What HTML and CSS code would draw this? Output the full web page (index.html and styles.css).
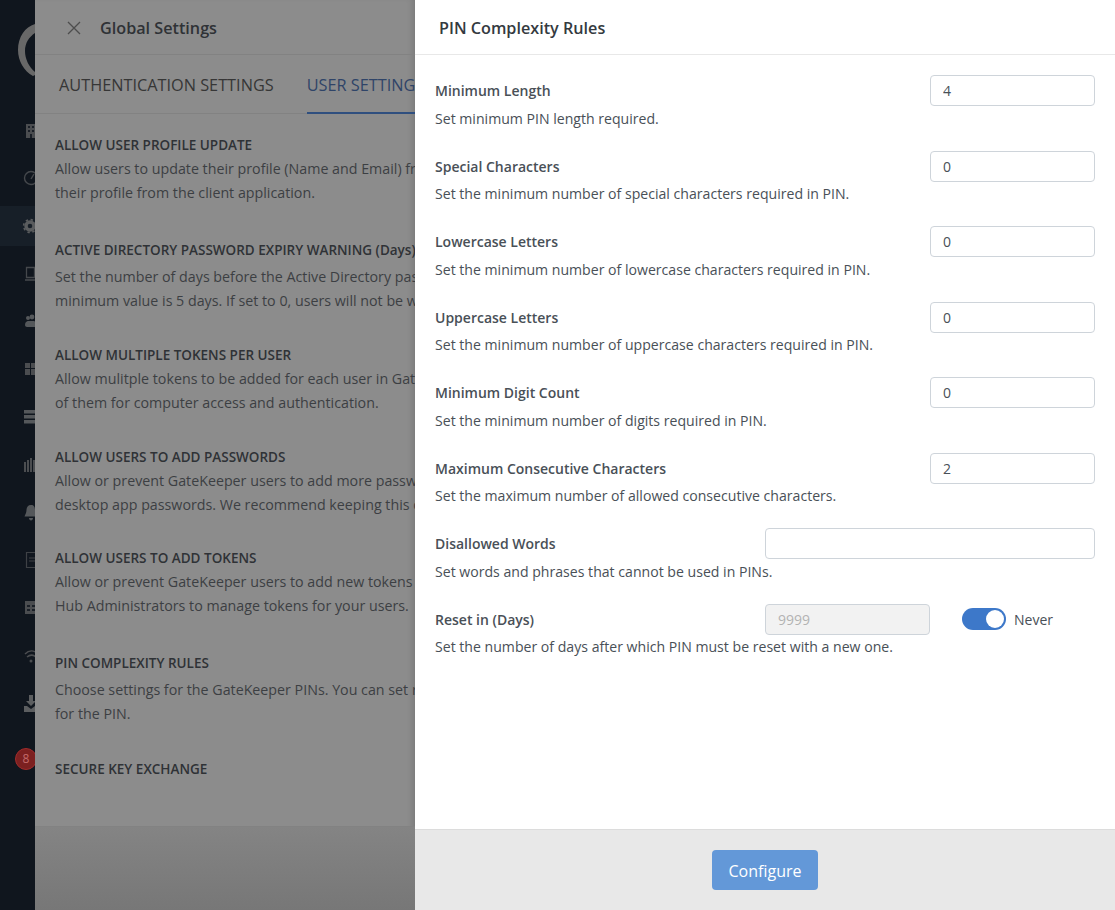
FILE: index.html
```html
<!DOCTYPE html>
<html lang="en">
<head>
<meta charset="utf-8">
<title>PIN Complexity Rules</title>
<link rel="stylesheet" href="styles.css">
</head>
<body>
<div class="app">
  <nav class="sidebar">
    <svg class="logo" width="35" height="60" viewBox="0 0 35 60"><path d="M35 0C25 3 18 13 18 26c0 11 6 21 15 26l2-1V48C29 43 25 35 25 27c0-8 4-14 10-18z" fill="#686868"/></svg>
    <div class="nav-item"><svg width="35" height="16" viewBox="0 0 35 16"><path d="M26 1h9v14h-9z" fill="#4b4d50"/><path d="M28 3h2v2h-2zM32 3h2v2h-2zM28 7h2v2h-2zM32 7h2v2h-2zM30 11h2v4h-2z" fill="#1a1f27"/></svg></div>
    <div class="nav-item"><svg width="35" height="16" viewBox="0 0 35 16"><circle cx="31" cy="8" r="6.5" fill="none" stroke="#45484c" stroke-width="1.4"/><path d="M31 9l3-5" stroke="#45484c" stroke-width="1.4"/></svg></div>
    <div class="nav-item active"><svg width="35" height="16" viewBox="0 0 35 16"><circle cx="30" cy="8" r="4" fill="none" stroke="#5a5c5e" stroke-width="3.4"/><circle cx="30" cy="8" r="6.4" fill="none" stroke="#5a5c5e" stroke-width="1.6" stroke-dasharray="2.4 2.6"/></svg></div>
    <div class="nav-item"><svg width="35" height="16" viewBox="0 0 35 16"><path d="M26.500 1.500h8v10h-8z" fill="none" stroke="#45484c" stroke-width="1.300"/><path d="M25 14h10" stroke="#45484c" stroke-width="1.600"/></svg></div>
    <div class="nav-item"><svg width="35" height="16" viewBox="0 0 35 16"><circle cx="28" cy="4" r="2" fill="#55585b"/><circle cx="32" cy="3" r="2.400" fill="#55585b"/><path d="M25 11c0-3 2-4 3-4h6c1 0 1 1 1 1v5h-8c-1 0-2-1-2-2z" fill="#55585b"/></svg></div>
    <div class="nav-item"><svg width="35" height="16" viewBox="0 0 35 16"><path d="M25 2h5v5h-5zM31 2h4v5h-4zM25 8h5v6h-5zM31 8h4v6h-4z" fill="#4b4d50"/></svg></div>
    <div class="nav-item"><svg width="35" height="16" viewBox="0 0 35 16"><path d="M24 1h11v3.500H24zM24 6h11v3.500H24zM24 11h11v3.500H24z" fill="#55585b"/></svg></div>
    <div class="nav-item"><svg width="35" height="16" viewBox="0 0 35 16"><path d="M24 5h2v10h-2zM27 3h2v12h-2zM30 1h2v14h-2zM33 3h2v12h-2z" fill="#4b4d50"/></svg></div>
    <div class="nav-item"><svg width="35" height="18" viewBox="0 0 35 18"><path d="M31 1c-3 0-4.500 2-4.500 5 0 3-1.500 5-2 6.500h12c-.5-1.500-1.500-3.500-1.500-6.500 0-3-1-5-4-5zM29 14h4c0 1.500-1 2.500-2 2.500s-2-1-2-2.500z" fill="#55585b"/></svg></div>
    <div class="nav-item"><svg width="35" height="16" viewBox="0 0 35 16"><path d="M26.500 .5h10v15h-10z" fill="none" stroke="#3e4145" stroke-width="1.200"/><path d="M29 6h6M29 9h6" stroke="#3e4145" stroke-width="1.200"/></svg></div>
    <div class="nav-item"><svg width="35" height="16" viewBox="0 0 35 16"><path d="M25 1h11v13H25z" fill="#4b4d50"/><path d="M27 5h3v2h-3zM32 5h3v2h-3zM27 9h3v2h-3zM32 9h3v2h-3z" fill="#1a1f27"/></svg></div>
    <div class="nav-item"><svg width="35" height="16" viewBox="0 0 35 16"><path d="M25 6c4-4 9-4 13 0M27 9c3-2.500 6-2.500 9 0" fill="none" stroke="#4b4d50" stroke-width="1.500"/><circle cx="31" cy="13" r="1.500" fill="#4b4d50"/></svg></div>
    <div class="nav-item"><svg width="35" height="18" viewBox="0 0 35 18"><path d="M29 0h4v6h3l-5 5-5-5h3zM24 11h3l4 3 4-3v6H24z" fill="#5c5e60"/></svg></div>
    <div class="badge">8</div>
  </nav>

  <section class="settings">
    <header class="settings-head">
      <svg class="close" width="14" height="14" viewBox="0 0 14 14"><path d="M1 1l12 12M13 1L1 13" stroke="#4d4d4d" stroke-width="1.300" fill="none"/></svg>
      <h1>Global Settings</h1>
    </header>
    <div class="tabs">
      <span class="tab">AUTHENTICATION SETTINGS</span>
      <span class="tab current">USER SETTINGS</span>
    </div>
    <div class="settings-body">
      <div class="block loose">
        <h3>ALLOW USER PROFILE UPDATE</h3>
        <p>Allow users to update their profile (Name and Email) from the Hub. Users can also update<br>their profile from the client application.</p>
      </div>
      <div class="block">
        <h3 class="spaced">ACTIVE DIRECTORY PASSWORD EXPIRY WARNING (Days)</h3>
        <p>Set the number of days before the Active Directory password expires to warn users. The<br>minimum value is 5 days. If set to 0, users will not be warned.</p>
      </div>
      <div class="block">
        <h3>ALLOW MULTIPLE TOKENS PER USER</h3>
        <p>Allow mulitple tokens to be added for each user in GateKeeper. Users can use any one<br>of them for computer access and authentication.</p>
      </div>
      <div class="block tight">
        <h3>ALLOW USERS TO ADD PASSWORDS</h3>
        <p>Allow or prevent GateKeeper users to add more passwords for websites and<br>desktop app passwords. We recommend keeping this on.</p>
      </div>
      <div class="block loose">
        <h3>ALLOW USERS TO ADD TOKENS</h3>
        <p>Allow or prevent GateKeeper users to add new tokens on their own. This allows<br>Hub Administrators to manage tokens for your users.</p>
      </div>
      <div class="block wider">
        <h3 class="spaced">PIN COMPLEXITY RULES</h3>
        <p>Choose settings for the GateKeeper PINs. You can set rules and requirements<br>for the PIN.</p>
      </div>
      <div class="block">
        <h3>SECURE KEY EXCHANGE</h3>
      </div>
    </div>
    <div class="settings-foot"></div>
  </section>

  <aside class="drawer">
    <header class="drawer-head"><h2>PIN Complexity Rules</h2></header>
    <div class="drawer-body">
      <div class="rule">
        <div class="rule-top"><label>Minimum Length</label><input class="field" type="text" value="4"></div>
        <p>Set minimum PIN length required.</p>
      </div>
      <div class="rule">
        <div class="rule-top"><label>Special Characters</label><input class="field" type="text" value="0"></div>
        <p>Set the minimum number of special characters required in PIN.</p>
      </div>
      <div class="rule">
        <div class="rule-top"><label>Lowercase Letters</label><input class="field" type="text" value="0"></div>
        <p>Set the minimum number of lowercase characters required in PIN.</p>
      </div>
      <div class="rule">
        <div class="rule-top"><label>Uppercase Letters</label><input class="field" type="text" value="0"></div>
        <p>Set the minimum number of uppercase characters required in PIN.</p>
      </div>
      <div class="rule">
        <div class="rule-top"><label>Minimum Digit Count</label><input class="field" type="text" value="0"></div>
        <p>Set the minimum number of digits required in PIN.</p>
      </div>
      <div class="rule">
        <div class="rule-top"><label>Maximum Consecutive Characters</label><input class="field" type="text" value="2"></div>
        <p>Set the maximum number of allowed consecutive characters.</p>
      </div>
      <div class="rule">
        <div class="rule-top"><label>Disallowed Words</label><input class="field wide" type="text"></div>
        <p>Set words and phrases that cannot be used in PINs.</p>
      </div>
      <div class="rule">
        <div class="rule-top reset">
          <label>Reset in (Days)</label>
          <input class="field" type="text" placeholder="9999" disabled>
          <span class="switch"><span class="knob"></span></span>
          <span class="never">Never</span>
        </div>
        <p>Set the number of days after which PIN must be reset with a new one.</p>
      </div>
    </div>
    <footer class="drawer-foot"><button class="primary" type="button">Configure</button></footer>
  </aside>
</div>
</body>
</html>
```

FILE: styles.css
```css
* { box-sizing: border-box; }
html, body { margin: 0; height: 100%; overflow: hidden; }
body { font-family: "Open Sans", "Noto Sans", sans-serif; font-size: 14px; color: #495057; }
h1, h2, h3, p { margin: 0; }

.app { display: flex; width: 1115px; height: 910px; overflow: hidden; }

.sidebar { flex: 0 0 35px; width: 35px; background: #10161e; display: flex; flex-direction: column; padding-top: 24px; position: relative; }
.logo { display: block; margin-bottom: 26.500px; }
.nav-item { height: 40px; flex: none; display: flex; align-items: center; margin-bottom: 7.750px; overflow: hidden; }
.nav-item.active { background: #171f28; }
.nav-item svg { display: block; }
.badge { position: absolute; left: 15px; top: 748px; width: 22px; height: 22px; border-radius: 50%; background: #7c2020; border: 1px solid #a02c2c; color: #c46a6a; font-size: 12px; line-height: 20px; text-align: center; clip-path: inset(0 2px 0 0); }

.settings { flex: 0 0 380px; width: 380px; background: #8c8c8c; display: flex; flex-direction: column; overflow: hidden; box-shadow: inset -6px 0 6px -4px rgba(0,0,0,.14); }
.settings-head { height: 55px; flex: none; display: flex; align-items: center; padding: 1px 0 0 32px; border-bottom: 1px solid #828282; }
.close { margin-right: 19px; }
.settings-head h1 { font-size: 16.2px; font-weight: 600; color: #2f3236; }
.tabs { height: 59px; flex: none; display: flex; gap: 33px; padding-left: 24px; border-bottom: 1px solid #828282; white-space: nowrap; }
.tab { font-size: 16.3px; line-height: 61px; height: 59px; color: #363636; flex: none; }
.tab.current { color: #2f4468; border-bottom: 2px solid #2f4f7f; }
.settings-body { flex: 1; padding: 19px 0 0 20px; white-space: nowrap; color: #3c3f43; }
.settings-body h3 { font-size: 13.5px; line-height: 24px; font-weight: 600; color: #2f3236; }
.settings-body h3.spaced { margin-bottom: 3px; }
.settings-body p { font-size: 14.25px; line-height: 24px; }
.block { margin-bottom: 30px; }
.block.loose { margin-bottom: 33px; }
.block.tight { margin-bottom: 29px; }
.block.wider { margin-bottom: 31px; }
.settings-foot { height: 84px; flex: none; background: linear-gradient(#848484, #777); border-top: 1px solid #828282; }

.drawer { flex: 0 0 700px; width: 700px; background: #fff; display: flex; flex-direction: column; }
.drawer-head { height: 55px; flex: none; display: flex; align-items: center; padding: 1px 0 0 24px; border-bottom: 1px solid #e8e8e8; }
.drawer-head h2 { font-size: 16.2px; font-weight: 600; color: #343a40; }
.drawer-body { flex: 1; padding: 20px 20px 0; }
.rule { height: 75.5px; }
.rule p { font-size: 14.1px; line-height: 21px; margin-top: 1.5px; }
.rule-top { display: flex; align-items: center; height: 31px; }
.rule-top label { flex: 1; font-weight: 600; color: #495057; }
.field { flex: none; width: 165px; height: 31px; padding: 0 12px; border: 1px solid #ced4da; border-radius: 4px; background: #fff; font: inherit; color: #495057; outline: none; }
.field.wide { width: 330px; }
.field:disabled { background: #f2f2f2; }
.field::placeholder { color: #b3b3b3; opacity: 1; }
.reset label { flex: 0 0 330px; }
.switch { flex: none; width: 44px; height: 22px; margin-left: 32px; border-radius: 11px; background: #3d78c9; display: flex; justify-content: flex-end; align-items: center; padding-right: 2px; }
.knob { width: 18px; height: 18px; border-radius: 50%; background: #fff; }
.never { margin-left: 8px; }
.drawer-foot { height: 81px; flex: none; background: #e8e8e8; border-top: 1px solid #dcdcdc; display: flex; justify-content: center; align-items: center; }
.primary { width: 106px; height: 40px; padding: 2px 0 0; border: 0; border-radius: 4px; background: #6398d8; color: #fff; font: inherit; font-size: 16px; }
```
